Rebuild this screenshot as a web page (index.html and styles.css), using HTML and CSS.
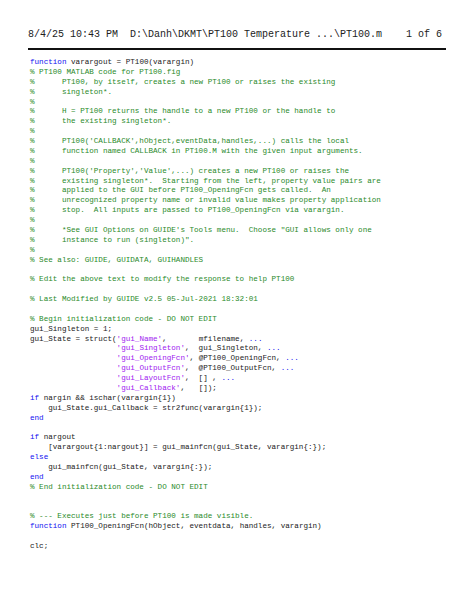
FILE: index.html
```html
<!DOCTYPE html>
<html>
<head>
<meta charset="utf-8">
<link rel="stylesheet" href="styles.css">
</head>
<body>
<div class="page">
<div class="header">8/4/25 10:43 PM  D:\Danh\DKMT\PT100 Temperature ...\PT100.m    1 of 6</div>
<pre class="code"><span class="kw">function</span> varargout = PT100(varargin)
<span class="cm">% PT100 MATLAB code for PT100.fig</span>
<span class="cm">%      PT100, by itself, creates a new PT100 or raises the existing</span>
<span class="cm">%      singleton*.</span>
<span class="cm">%</span>
<span class="cm">%      H = PT100 returns the handle to a new PT100 or the handle to</span>
<span class="cm">%      the existing singleton*.</span>
<span class="cm">%</span>
<span class="cm">%      PT100('CALLBACK',hObject,eventData,handles,...) calls the local</span>
<span class="cm">%      function named CALLBACK in PT100.M with the given input arguments.</span>
<span class="cm">%</span>
<span class="cm">%      PT100('Property','Value',...) creates a new PT100 or raises the</span>
<span class="cm">%      existing singleton*.  Starting from the left, property value pairs are</span>
<span class="cm">%      applied to the GUI before PT100_OpeningFcn gets called.  An</span>
<span class="cm">%      unrecognized property name or invalid value makes property application</span>
<span class="cm">%      stop.  All inputs are passed to PT100_OpeningFcn via varargin.</span>
<span class="cm">%</span>
<span class="cm">%      *See GUI Options on GUIDE's Tools menu.  Choose "GUI allows only one</span>
<span class="cm">%      instance to run (singleton)".</span>
<span class="cm">%</span>
<span class="cm">% See also: GUIDE, GUIDATA, GUIHANDLES</span>

<span class="cm">% Edit the above text to modify the response to help PT100</span>

<span class="cm">% Last Modified by GUIDE v2.5 05-Jul-2021 18:32:01</span>

<span class="cm">% Begin initialization code - DO NOT EDIT</span>
gui_Singleton = 1;
gui_State = struct(<span class="st">'gui_Name'</span>,       mfilename, <span class="kw">...</span>
                   <span class="st">'gui_Singleton'</span>,  gui_Singleton, <span class="kw">...</span>
                   <span class="st">'gui_OpeningFcn'</span>, @PT100_OpeningFcn, <span class="kw">...</span>
                   <span class="st">'gui_OutputFcn'</span>,  @PT100_OutputFcn, <span class="kw">...</span>
                   <span class="st">'gui_LayoutFcn'</span>,  [] , <span class="kw">...</span>
                   <span class="st">'gui_Callback'</span>,   []);
<span class="kw">if</span> nargin &amp;&amp; ischar(varargin{1})
    gui_State.gui_Callback = str2func(varargin{1});
<span class="kw">end</span>

<span class="kw">if</span> nargout
    [varargout{1:nargout}] = gui_mainfcn(gui_State, varargin{:});
<span class="kw">else</span>
    gui_mainfcn(gui_State, varargin{:});
<span class="kw">end</span>
<span class="cm">% End initialization code - DO NOT EDIT</span>


<span class="cm">% --- Executes just before PT100 is made visible.</span>
<span class="kw">function</span> PT100_OpeningFcn(hObject, eventdata, handles, varargin)

clc;</pre>
</div>
</body>
</html>
```

FILE: styles.css
```css
html, body {
  margin: 0;
  padding: 0;
  background: #ffffff;
}

.page {
  padding: 29px 0 0 28px;
}

.header {
  width: 418px;
  font-family: "Liberation Mono", monospace;
  font-size: 10px;
  line-height: 12px;
  color: #222222;
  white-space: pre;
  padding-bottom: 7px;
  border-bottom: 2px solid #111111;
}

.code {
  margin: 8px 0 0 2px;
  font-family: "Liberation Mono", monospace;
  font-size: 7.6px;
  line-height: 9.88px;
  color: #1a1a1a;
  white-space: pre;
}

.kw {
  color: #1010f0;
}

.cm {
  color: #2a8a2a;
}

.st {
  color: #a020f0;
}
```
